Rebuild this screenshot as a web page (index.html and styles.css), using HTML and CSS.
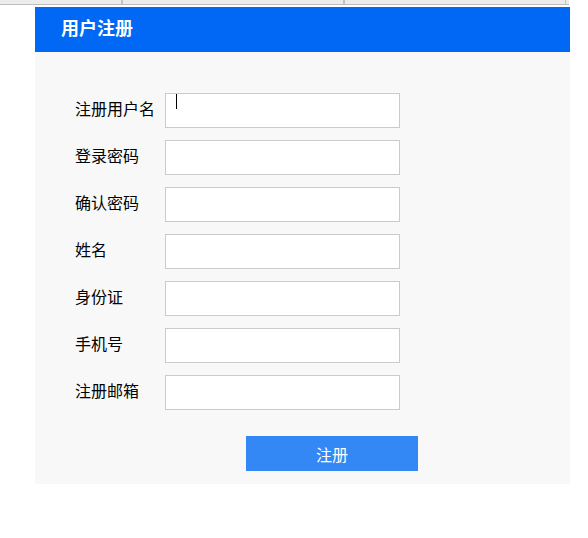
FILE: index.html
```html
<!DOCTYPE html>
<html lang="zh-CN">
<head>
<meta charset="utf-8">
<title>用户注册</title>
<link rel="stylesheet" href="styles.css">
</head>
<body>
<div class="topbar">
  <div class="cell c1"></div>
  <div class="cell c2"></div>
  <div class="cell c3"></div>
  <div class="cell c4"></div>
</div>
<div class="box">
  <div class="head">用户注册</div>
  <form class="panel">
    <div class="rows">
      <label class="row"><span class="lbl">注册用户名</span><span class="field"><input type="text" class="inp"><span class="caret"></span></span></label>
      <label class="row"><span class="lbl">登录密码</span><span class="field"><input type="password" class="inp"></span></label>
      <label class="row"><span class="lbl">确认密码</span><span class="field"><input type="password" class="inp"></span></label>
      <label class="row"><span class="lbl">姓名</span><span class="field"><input type="text" class="inp"></span></label>
      <label class="row"><span class="lbl">身份证</span><span class="field"><input type="text" class="inp"></span></label>
      <label class="row"><span class="lbl">手机号</span><span class="field"><input type="text" class="inp"></span></label>
      <label class="row"><span class="lbl">注册邮箱</span><span class="field"><input type="text" class="inp"></span></label>
    </div>
    <div class="actions"><button type="button" class="btn">注册</button></div>
  </form>
</div>
</body>
</html>
```
FILE: styles.css
```css
* { box-sizing: border-box; }
html, body { margin: 0; padding: 0; background: #fff; }
body {
  font-family: "Noto Sans CJK SC", "DejaVu Sans", sans-serif;
  color: #000;
}
.topbar {
  display: flex;
  width: 569px;
  height: 5px;
  background: #ececec;
  border-bottom: 1px solid #bdbdbd;
}
.cell { height: 4px; border-right: 1px solid #c4c4c4; }
.c1 { width: 122px; }
.c2 { width: 222px; border-left: 1px solid #c4c4c4; }
.c3 { width: 222px; border-left: 1px solid #c4c4c4; }
.c4 { flex: 1; border-right: 0; }
.box {
  margin: 2px 0 0 35px;
  width: 535px;
}
.head {
  height: 45px;
  background: #0068f5;
  color: #fff;
  font-size: 18px;
  font-weight: 700;
  line-height: 41px;
  padding-left: 26px;
}
.panel {
  display: block;
  background: #f8f8f8;
  padding: 41px 0 13px 40px;
}
.rows {
  display: flex;
  flex-direction: column;
  gap: 12px;
}
.row {
  display: flex;
  align-items: center;
  height: 35px;
}
.lbl {
  width: 90px;
  font-size: 16px;
  line-height: 20px;
  margin-top: -5px;
  white-space: nowrap;
}
.field { position: relative; display: block; }
.inp {
  display: block;
  width: 235px;
  height: 35px;
  margin: 0;
  border: 1px solid #cbcbcb;
  background: #fff;
  padding: 0 10px;
  font: inherit;
  outline: none;
}
.caret {
  position: absolute;
  left: 11px;
  top: 1px;
  width: 1px;
  height: 15px;
  background: #000;
}
.actions {
  display: flex;
  margin-top: 26px;
  padding-left: 171px;
}
.btn {
  width: 172px;
  height: 35px;
  border: 0;
  margin: 0;
  background: #3388f5;
  color: #fff;
  font-family: inherit;
  font-size: 16px;
  padding: 0;
  cursor: pointer;
}
```
